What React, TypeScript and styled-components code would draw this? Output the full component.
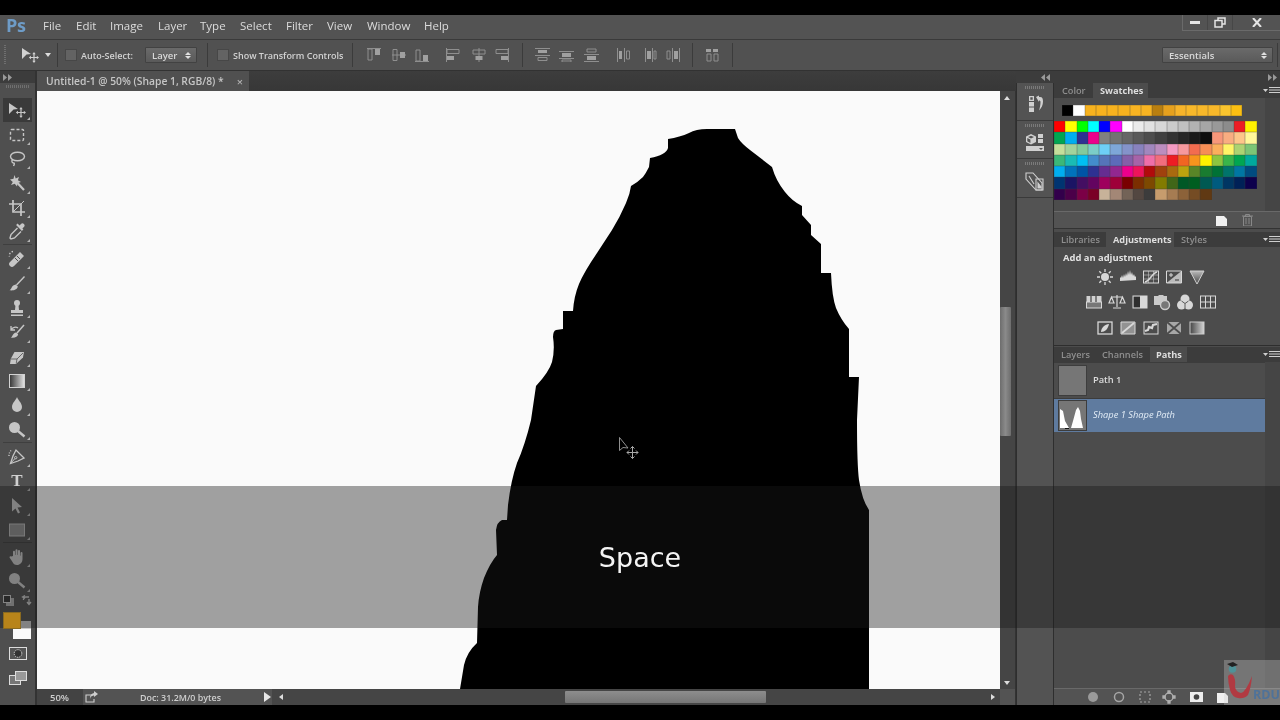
import React from "react";
import styled, { createGlobalStyle } from "styled-components";

const Global = createGlobalStyle`
  html, body { margin: 0; padding: 0; background: #000; }
  * { box-sizing: border-box; }
`;
const UI = `"Open Sans", "Noto Sans", sans-serif`;

const Screen = styled.div`
  position: relative; width: 1280px; height: 720px; overflow: hidden; background: #000;
  padding: 15px 0; display: flex; flex-direction: column; font-family: ${UI};
  filter: blur(0.5px);
`;
const MenuBar = styled.div`
  height: 25px; flex: none; background: #535353; border-bottom: 1px solid #3a3a3a;
  display: flex; align-items: center; position: relative; padding-bottom: 4px;
`;
const Logo = styled.div`
  width: 43px; padding-left: 6px; font: 700 18px "Open Sans", sans-serif; color: #6e9cc7; letter-spacing: -0.4px;
`;
const MenuItem = styled.span<{ $w: number }>`
  width: ${(p) => p.$w}px; font-size: 11.5px; color: #dcdcdc; white-space: nowrap;
`;
const WindowButtons = styled.div`
  margin-left: auto; width: 98px; height: 16px; align-self: flex-start; display: flex;
  border-bottom: 1px solid #6a6a6a; border-left: 1px solid #6a6a6a;
`;
const WindowButton = styled.div<{ $w: number }>`
  width: ${(p) => p.$w}px; display: flex; align-items: center; justify-content: center;
  border-right: 1px solid #474747; color: #e4e4e4;
  &:last-child { border-right: 0; }
`;
const Options = styled.div`
  height: 31px; flex: none; background: #515151; border-bottom: 1px solid #323232;
  display: flex; align-items: center; padding-left: 4px; color: #d2d2d2;
`;
const Grip = styled.div`
  width: 2px; height: 20px;
  background: repeating-linear-gradient(#6f6f6f 0 1px, transparent 1px 2px);
`;
const OptSlot = styled.div<{ $ml: number; $w: number }>`
  margin-left: ${(p) => p.$ml}px; width: ${(p) => p.$w}px; flex: none; display: flex; align-items: center;
  justify-content: flex-start; white-space: nowrap; font-size: 9px; font-weight: 600; color: #d2d2d2;
`;
const OptSep = styled.div<{ $ml: number }>`
  margin-left: ${(p) => p.$ml}px; width: 1px; height: 24px; flex: none; background: #3b3b3b;
`;
const Check = styled.div<{ $ml: number }>`
  margin-left: ${(p) => p.$ml}px; width: 12px; height: 12px; flex: none; background: #636363;
  border: 1px solid #474747;
`;
const Select = styled.div<{ $ml: number; $w: number }>`
  margin-left: ${(p) => p.$ml}px; width: ${(p) => p.$w}px; height: 16px; flex: none; display: flex;
  align-items: center; justify-content: space-between; padding: 0 5px 0 6px; font-size: 9.5px; font-weight: 600;
  color: #d8d8d8; background: linear-gradient(#6a6a6a, #5a5a5a); border: 1px solid #424242; border-radius: 1px;
`;
const Spinner = styled.span`
  display: inline-flex; flex-direction: column; gap: 1px;
  &::before, &::after { content: ""; width: 0; height: 0; border-left: 3px solid transparent; border-right: 3px solid transparent; }
  &::before { border-bottom: 3px solid #e0e0e0; }
  &::after { border-top: 3px solid #e0e0e0; }
`;
const Workspace = styled.div`
  flex: 1; min-height: 0; display: flex;
`;
const Toolbox = styled.div`
  width: 37px; flex: none; background: #4f4f4f; border-right: 2px solid #333; display: flex; flex-direction: column;
`;
const CollapseStrip = styled.div`
  height: 12px; flex: none; background: #3c3c3c; color: #9a9a9a; display: flex; align-items: center; padding: 0 3px;
`;
const StripMark = styled.div<{ $ml: string }>`
  margin-left: ${(p) => p.$ml}; display: flex;
`;
const ToolGrip = styled.div`
  height: 6px; margin: 2px 6px 0; flex: none;
  background: repeating-linear-gradient(90deg, #777 0 1px, transparent 1px 2px);
  opacity: .8; background-size: 100% 3px; background-repeat: no-repeat;
`;
const ToolList = styled.div`
  padding-top: 7px; display: flex; flex-direction: column;
`;
const Tool = styled.div<{ $on?: boolean }>`
  position: relative; height: 24.4px; margin: 0 3px; padding-right: 1px; display: flex; align-items: center; justify-content: center;
  color: #c6c6c6; background: ${(p) => (p.$on ? "#3a3a3a" : "transparent")};
  &::after { content: ""; position: absolute; right: 2px; bottom: 2px; width: 0; height: 0;
    border-left: 3px solid transparent; border-bottom: 3px solid #b5b5b5; }
`;
const ToolDivider = styled.div`
  height: 2.6px; margin: 0 3px; flex: none; border-top: 1px solid #3f3f3f;
`;
const ToolLetter = styled.span`
  font: 700 17px "Liberation Serif", serif; color: #d0d0d0;
`;
const MiniColors = styled.div`
  height: 16px; margin-top: -1px; padding: 0 3px; display: flex; justify-content: space-between; align-items: center; color: #c8c8c8;
`;
const ColorStack = styled.div`
  position: relative; height: 28px; margin: 3px 0 0 3px; width: 28px;
`;
const FgColor = styled.div`
  position: absolute; left: 0; top: 0; width: 18px; height: 17px; background: #b8841a; border: 1px solid #8a6a20; z-index: 1;
`;
const BgColor = styled.div`
  position: absolute; left: 10px; top: 9px; width: 18px; height: 18px; background: #fbfbfb;
  border-top: 8px solid #c9c9c9;
`;
const ModeIcon = styled.div<{ $mt: number }>`
  margin-top: ${(p) => p.$mt}px; display: flex; justify-content: center; color: #d2d2d2;
`;
const DocColumn = styled.div`
  width: 979px; flex: none; display: flex; flex-direction: column; background: #474747;
`;
const TabRow = styled.div`
  height: 20px; flex: none; background: linear-gradient(#3d3d3d, #373737); display: flex;
`;
const DocTab = styled.div`
  width: 212px; background: #505050; display: flex; align-items: center; justify-content: space-between;
  padding: 0 6px 0 9px; font-size: 10.3px; font-weight: 600; color: #c6c6c6; white-space: nowrap;
`;
const TabClose = styled.span`
  font-size: 11px; color: #b0b0b0;
`;
const DocMiddle = styled.div`
  flex: 1; min-height: 0; display: flex;
`;
const Canvas = styled.div`
  position: relative; width: 963px; background: #fafafa; overflow: hidden;
`;
const CanvasDrawing = styled.svg`
  position: absolute; inset: 0; width: 963px; height: 598px;
`;
const VScroll = styled.div`
  width: 16px; background: #454545; display: flex; flex-direction: column; align-items: center; border-right: 1px solid #333;
  position: relative; padding-top: 216px;
`;
const VThumb = styled.div`
  width: 11px; height: 129px; margin-right: 4px; background: linear-gradient(90deg, #6d6d6d, #8a8a8a 50%, #6d6d6d); border-radius: 1px;
`;
const ArrowMark = styled.div<{ $dir: "up" | "down" | "left" | "right"; $pos?: string }>`
  position: absolute; width: 0; height: 0; ${(p) => p.$pos || ""};
  border: 3px solid transparent;
  ${(p) => (p.$dir === "up" ? "border-bottom: 4px solid #ddd; border-top: 0;" : "")}
  ${(p) => (p.$dir === "down" ? "border-top: 4px solid #ddd; border-bottom: 0;" : "")}
  ${(p) => (p.$dir === "left" ? "border-right: 4px solid #ddd; border-left: 0;" : "")}
  ${(p) => (p.$dir === "right" ? "border-left: 4px solid #ddd; border-right: 0;" : "")}
`;
const StatusBar = styled.div`
  height: 16px; flex: none; display: flex; background: #535353; color: #cfcfcf; font-size: 9.5px; font-weight: 600; align-items: stretch;
`;
const Zoomed = styled.div`
  width: 46px; background: #434343; padding-left: 13px; display: flex; align-items: center;
`;
const ShareSlot = styled.div`
  width: 57px; display: flex; align-items: center; padding-left: 2px; color: #cfcfcf;
`;
const DocInfo = styled.div`
  width: 124px; font-size: 8.9px; display: flex; align-items: center; white-space: nowrap;
`;
const PlaySlot = styled.div`
  width: 8px; display: flex; align-items: center; justify-content: flex-start;
  &::before { content: ""; border-left: 7px solid #e8e8e8; border-top: 5px solid transparent; border-bottom: 5px solid transparent; }
`;
const HScroll = styled.div`
  position: relative; width: 728px; background: #454545; padding-left: 293px;
`;
const HThumb = styled.div`
  width: 201px; height: 12px; margin-top: 2px; background: linear-gradient(#8d8d8d, #767676); border-radius: 1px;
`;
const Corner = styled.div`
  width: 16px; background: #535353; border-right: 1px solid #333;
`;
const RightSide = styled.div`
  flex: 1; min-width: 0; display: flex; flex-direction: column;
`;
const RightBody = styled.div`
  flex: 1; min-height: 0; display: flex;
`;
const Dock = styled.div`
  width: 38px; flex: none; background: #535353; border-left: 1px solid #2e2e2e; border-right: 1px solid #2e2e2e; display: flex; flex-direction: column;
`;
const DockSection = styled.div<{ $h: number }>`
  height: ${(p) => p.$h}px; flex: none; border-bottom: 1px solid #3a3a3a; color: #d0d0d0;
  display: flex; flex-direction: column; align-items: center; padding-top: 3px;
`;
const DockGrip = styled.div`
  width: 20px; height: 3px; margin-bottom: 6px; background: repeating-linear-gradient(90deg, #7a7a7a 0 1px, transparent 1px 2px);
`;
const Panels = styled.div`
  flex: 1; min-width: 0; display: flex; flex-direction: column; background: #4c4c4c;
`;
const PanelHeader = styled.div`
  height: 15px; flex: none; background: #3c3c3c; display: flex; position: relative;
`;
const PanelTab = styled.div<{ $w: number; $pl: number; $on?: boolean }>`
  width: ${(p) => p.$w}px; padding-left: ${(p) => p.$pl}px; font-size: 9.2px; line-height: 16px; white-space: nowrap;
  font-weight: ${(p) => (p.$on ? 700 : 600)}; color: ${(p) => (p.$on ? "#dedede" : "#8f8f8f")};
  background: ${(p) => (p.$on ? "#4c4c4c" : "transparent")};
`;
const PanelMenu = styled.div`
  margin-left: auto; width: 17px; color: #cfcfcf; display: flex; align-items: center;
`;
const SwatchPanel = styled.div`
  height: 146px; flex: none; display: flex; flex-direction: column; border-bottom: 1px solid #333;
`;
const SwatchBody = styled.div`
  flex: 1; min-height: 0; display: flex;
`;
const SwatchWell = styled.div`
  width: 211px; flex: none; padding-top: 7px;
`;
const ScrollTrack = styled.div`
  width: 15px; flex: none; background: #454545;
`;
const RecentRow = styled.div`
  display: flex; padding-left: 8px; height: 11px; margin-bottom: 5px;
`;
const SwatchGrid = styled.div`
  display: grid; grid-template-columns: repeat(18, 11.25px); grid-auto-rows: 11.25px; width: 203px;
`;
const Swatch = styled.div<{ $c: string }>`
  background: ${(p) => p.$c}; box-shadow: inset 0 0 0 .5px rgba(60, 60, 60, .35);
`;
const RecentSwatch = styled(Swatch)`
  width: 11.25px; height: 11px;
`;
const PanelFoot = styled.div`
  height: 17px; flex: none; border-top: 1px solid #696969; background: #535353; display: flex; align-items: center; color: #e8e8e8; position: relative;
`;
const FootIcon = styled.div<{ $ml: number }>`
  margin-left: ${(p) => p.$ml}px; width: 14px; height: 14px; flex: none; display: flex; align-items: center; justify-content: center;
`;
const AdjustPanel = styled.div`
  height: 114px; flex: none; margin-top: 3px; display: flex; flex-direction: column; border-bottom: 1px solid #2e2e2e;
`;
const AdjustTitle = styled.div`
  padding: 4px 0 0 9px; height: 17px; font-size: 9.4px; font-weight: 700; color: #e2e2e2; white-space: nowrap;
`;
const AdjustRows = styled.div`
  width: 194px; display: flex; flex-direction: column; align-items: center;
`;
const AdjustRow = styled.div`
  display: flex; height: 25.5px; align-items: center; justify-content: center;
`;
const AdjustIcon = styled.div`
  width: 22.8px; display: flex; justify-content: center; color: #d8d8d8;
`;
const PathsPanel = styled.div`
  flex: 1; min-height: 0; margin-top: 1px; display: flex; flex-direction: column;
`;
const PathsBody = styled.div`
  flex: 1; min-height: 0; display: flex;
`;
const PathsList = styled.div`
  width: 211px; flex: none; display: flex; flex-direction: column;
`;
const PathRow = styled.div<{ $on?: boolean }>`
  height: ${(p) => (p.$on ? 34 : 36)}px; padding-left: 4px; display: flex; align-items: center; flex: none;
  background: ${(p) => (p.$on ? "#5f7b9f" : "#4c4c4c")}; border-top: 1px solid #3c3c3c;
`;
const PathThumb = styled.div`
  width: 29px; height: 31px; flex: none; background: #767676; border: 1px solid #3d3d3d; display: flex;
`;
const PathName = styled.span<{ $on?: boolean }>`
  margin-left: 6px; padding-bottom: 2px; font-size: 9.3px; white-space: nowrap; font-weight: ${(p) => (p.$on ? 400 : 600)};
  font-style: ${(p) => (p.$on ? "italic" : "normal")}; color: ${(p) => (p.$on ? "#e2ecf6" : "#dcdcdc")};
`;
const Band = styled.div`
  position: absolute; left: 0; right: 0; top: 486px; height: 142px; background: rgba(26, 26, 26, .4);
  display: flex; align-items: center; justify-content: center;
`;
const BandLabel = styled.span`
  font: 400 27px "DejaVu Sans", sans-serif; color: #f4f4f4;
`;
const Watermark = styled.div`
  position: absolute; left: 1224px; top: 660px; width: 56px; height: 45px; background: rgba(205, 205, 205, .32);
`;
const WatermarkArt = styled.svg`
  position: absolute; left: 0; top: 0; width: 56px; height: 45px;
`;
const WatermarkText = styled.span`
  position: absolute; left: 29px; top: 26px; font: 700 12.5px "Open Sans", sans-serif; color: #4f7299; white-space: nowrap;
`;

const S = ({ w = 18, h = 18, vb = "0 0 18 18", children }: { w?: number; h?: number; vb?: string; children: React.ReactNode }) => (
  <svg width={w} height={h} viewBox={vb} fill="none" stroke="currentColor" strokeWidth={1.4}>{children}</svg>
);
const solid = { fill: "currentColor", stroke: "none" };

const MoveGlyph = () => (
  <>
    <path {...solid} d="M1 2l9 6-4.5.5L1 13z" />
    <path strokeWidth={1.2} d="M13 7.5v8M9 11.5h8" />
    <path {...solid} d="M13 6l1.7 2.2h-3.4zM13 17l-1.7-2.2h3.4zM7.8 11.5l2.2-1.7v3.4zM18 11.5l-2.2 1.7V9.8z" />
  </>
);
const tools: React.ReactNode[] = [
  <S><MoveGlyph /></S>,
  <S><rect x="2.5" y="3.5" width="13" height="11" rx="1" strokeDasharray="3 2" /></S>,
  <S><ellipse cx="9.5" cy="6.5" rx="7" ry="4.3" /><path d="M4.5 9.5c-1.5 2 0 3.5 1 3.5s1.2 1 0 3" /></S>,
  <S><path {...solid} d="M6.5 1l1.2 3.4L11 3 9.9 6.3 13 8 9.7 8.9 9 12.5 6.8 9.8 3 11l1.8-3.1L2 5.4l3.5-.7z" /><path strokeWidth={2.2} d="M9.5 9l6.5 7" /></S>,
  <S><path strokeWidth={1.7} d="M5 1v12h12M1 5h12v12" /><path strokeWidth={1} d="M5 13L16 2" /></S>,
  <S><path {...solid} d="M11.5 2.5l1.5-1.5a2 2 0 012.9 2.9L14.4 5.4l1 1-1.5 1.5-5.8-5.8 1.5-1.5z" /><path d="M9.5 5L3 11.5 2 15l1 1 3.5-1L13 8.5" /></S>,
  <S><path d="M5 1.5a4 4 0 00-3.5 5" strokeDasharray="1.5 1.5" /><path {...solid} d="M12 2l4 4-10 10a2.8 2.8 0 01-4-4z" /><path stroke="#4f4f4f" strokeWidth={1} d="M7 8l3 3M9 6l3 3" /></S>,
  <S><path strokeWidth={1.4} d="M16.5 1.5L8.5 10" /><path {...solid} d="M7.8 9.5l2 2c-.3 2.5-3.5 4.5-8.3 3.8 2.4-1 1.8-5.2 6.3-5.8z" /></S>,
  <S><circle {...solid} cx="9" cy="4" r="3" /><path {...solid} d="M7.5 6h3l.5 5h4v3H3v-3h4zM3 15.5h12V17H3z" /></S>,
  <S><path strokeWidth={1.3} d="M3 7c1.5-3 5-3.5 7-2M3 3v4h4" /><path strokeWidth={1.5} d="M16 2l-7 8" /><path {...solid} d="M8.3 9.5l1.8 1.8c-.3 2.5-3.2 4-7.3 3.4 2.2-.9 1.4-4.6 5.5-5.2z" /></S>,
  <S><path {...solid} d="M6.5 4h9.5l-1 5.5L8 16H2l.8-5.2z" /><path stroke="#4f4f4f" strokeWidth={.8} d="M3 11h6l6-6M9 11l-.8 4.5" /></S>,
  <svg width="18" height="18" viewBox="0 0 18 18"><defs><linearGradient id="gradTool"><stop offset="0" stopColor="#333" /><stop offset="1" stopColor="#e6e6e6" /></linearGradient></defs><rect x="1.5" y="2.5" width="15" height="13" fill="url(#gradTool)" stroke="#d2d2d2" /></svg>,
  <S><path {...solid} d="M9 1c1 3 5 6 5 10a5 5 0 01-10 0c0-4 4-7 5-10z" /></S>,
  <S><circle {...solid} cx="6.5" cy="6.5" r="5.5" /><path strokeWidth={2.4} d="M10 10l6.5 5.5" /></S>,
  <S><path d="M16 10L8 2 5 8 2.5 15.5 10 13l6-3z" strokeWidth={1.3} /><path strokeWidth={1} d="M2.5 15.5L7 10.5" /><circle cx="7.7" cy="9.7" r="1.2" strokeWidth={.9} /><path strokeDasharray="1 1.5" d="M1 8c0-3 1-5 3-6" /></S>,
  <ToolLetter>T</ToolLetter>,
  <S><path {...solid} d="M4 1l10 9-4.5.5 2.5 5-2 1-2.5-5L4 14.5z" /></S>,
  <S><rect x="1.5" y="3" width="15" height="12" fill="#8d8d8d" stroke="#b8b8b8" strokeWidth={1} /></S>,
  <S><path {...solid} d="M5 8V3.7a1 1 0 012 0V7l.5-.2V2.2a1 1 0 012 0v4.5l.5.2V3a1 1 0 012 0v4.5l.5.3V5a1 1 0 012 0v6c0 3.5-2.5 6-5.5 6-2.5 0-3.5-1-4.5-3L1.700 9.700c-.7-1 .6-2 1.500-1.300z" /></S>,
  <S><circle {...solid} cx="6.5" cy="6.5" r="5.5" /><path strokeWidth={2.4} d="M10 10l6.5 5.5" /></S>,
];

const AlignPaths: string[][] = [
  ["M0 .5h14M1 1h4v11H1z", "M8 1h5v6H8z"],
  ["M0 7h14M1 1.5h4v11H1z", "M8 4h5v6H8z"],
  ["M0 13.5h14M1 2h4v11H1z", "M8 7h5v6H8z"],
  ["M.5 0v14M1 1.5h12v4H1z", "M1 8h7v4H1z"],
  ["M7 0v14M1 2h12v4H1z", "M3.5 8h7v4h-7z"],
  ["M13.5 0v14M1 1.5h12v4H1z", "M6 8h7v4H6z"],
  ["M0 .5h15M0 7.5h15M3 9.5h9v3H3z", "M3 2h9v3H3z"],
  ["M0 3.5h15M0 10.5h15M3 12h9v2H3z", "M3 5h9v4H3z"],
  ["M0 6.5h15M0 13.5h15M3 1h9v3H3z", "M3 8h9v4H3z"],
  ["M.5 0v14M7.5 0v14M9.5 3h3v8h-3z", "M2 3h3v8H2z"],
  ["M3.5 0v14M10.5 0v14M12 3h2v8h-2z", "M5 3h4v8H5z"],
  ["M6.5 0v14M13.5 0v14M1 3h3v8H1z", "M8 3h4v8H8z"],
  ["M2 6h4v7H2zM9 6h4v7H9z", "M1 1h5v3H1zM8 1h5v3H8z"],
];
const AlignIcon = ({ i }: { i: number }) => (
  <svg width="15" height="14" viewBox="0 0 15 14" fill="none" stroke="#8f8f8f" strokeWidth={1}>
    <path d={AlignPaths[i][0]} />
    <path d={AlignPaths[i][1]} fill="#a0a0a0" stroke="none" />
  </svg>
);

const recent = ["#000", "#fff", "#f7b21e", "#f7b21e", "#f7b21e", "#f7b21e", "#f8b422", "#f8b422", "#b97f10", "#e6a11e", "#f7b42a", "#f8b82a", "#f8b82a", "#f8b82a", "#f9c42e", "#fbbf12"];
const swatches = [
  "#f00", "#ff0", "#0f0", "#0ff", "#00f", "#f0f", "#fff", "#ebebeb", "#e1e1e1", "#d7d7d7", "#cbcbcb", "#c0c0c0", "#b2b2b2", "#a6a6a6", "#999", "#8c8c8c", "#ed1c24", "#fff200",
  "#00a651", "#00aeef", "#2e3192", "#ec008c", "#808080", "#737373", "#666", "#595959", "#4d4d4d", "#404040", "#333", "#262626", "#1a1a1a", "#0d0d0d", "#f7977a", "#f9ad81", "#fdc68a", "#fff79a",
  "#c4df9b", "#a2d39c", "#82ca9d", "#7bcdc8", "#6ecff6", "#7ea7d8", "#8493ca", "#8882be", "#a187be", "#bc8dbf", "#f49ac2", "#f6989d", "#f26c4f", "#f68e55", "#fbaf5c", "#fff467", "#acd372", "#7cc576",
  "#3bb878", "#1abbb4", "#00bff3", "#438ccb", "#5574b9", "#5c6bb9", "#855fa8", "#a763a8", "#ef6ea8", "#f26d7d", "#ed1c24", "#f26522", "#f7941d", "#fff200", "#8dc63f", "#39b54a", "#00a651", "#00a99d",
  "#00aeef", "#0072bc", "#0054a6", "#2e3192", "#662d91", "#92278f", "#ec008c", "#ed145b", "#b10b0b", "#a0410d", "#a86a0f", "#bba30e", "#598527", "#197b30", "#007236", "#00746b", "#0076a3", "#004b80",
  "#003471", "#1b1464", "#440e62", "#630460", "#9e005d", "#9e0039", "#790000", "#7b2e00", "#7d4900", "#827b00", "#406618", "#005826", "#005e20", "#005952", "#005b7f", "#003663", "#002157", "#0d004c",
  "#32004b", "#4b0049", "#7b0046", "#7a0026", "#c7b299", "#a38776", "#736357", "#534741", "#3c3c3c", "#c69c6d", "#a67c52", "#8c6239", "#754c24", "#603913",
];

const DoubleArrow = ({ left }: { left?: boolean }) => (
  <svg width="9" height="7" viewBox="0 0 9 7" fill="currentColor">
    {left ? <path d="M4 0v7L0 3.5zM9 0v7L5 3.5z" /> : <path d="M0 0v7l4-3.5zM5 0v7l4-3.5z" />}
  </svg>
);
const MenuGlyph = () => (
  <svg width="17" height="9" viewBox="0 0 17 9" fill="currentColor">
    <path d="M0 3h5L2.5 6zM6 1h11v1H6zM6 3.5h11v1H6zM6 6h11v1H6z" />
  </svg>
);

const adjust: React.ReactNode[][] = [
  [
    <S><circle {...solid} cx="9" cy="9" r="4" /><path strokeWidth={1.3} d="M9 1v3M9 14v3M1 9h3M14 9h3M3.3 3.3l2 2M12.7 12.7l2 2M14.7 3.3l-2 2M5.3 12.700l-2 2" /></S>,
    <S><path {...solid} d="M1 13V9l1 1 1-3 1 3 1-4 1 3 1-4 1 3 1-5 1 4 1-5 1 5 1-3 1 4 1-2 1 3 1-1v4z" /></S>,
    <S><rect x="1.5" y="3" width="15" height="12" strokeWidth={1} /><path d="M1.5 7h15M1.5 11h15M6.5 3v12M11.5 3v12" strokeWidth={.5} /><path strokeWidth={1.6} d="M3 14C8 13 10 5 15 4" /></S>,
    <S><path {...solid} d="M1.5 15h15V3z" opacity=".8" /><path d="M1.5 3h15v12h-15z" strokeWidth={1} /><path d="M4 7h4M6 5v4" strokeWidth={1} /><path d="M10 12h4" strokeWidth={1} stroke="#333" /></S>,
    <svg width="18" height="18" viewBox="0 0 18 18"><defs><linearGradient id="tri" x1="0" x2="0" y1="0" y2="1"><stop offset="0" stopColor="#bbb" /><stop offset="1" stopColor="#444" /></linearGradient></defs><path d="M2 3h14L9 16z" fill="url(#tri)" stroke="#cfcfcf" /></svg>,
  ],
  [
    <S><path {...solid} d="M1.5 3h15v6h-15z" opacity=".95" /><rect x="1.5" y="9" width="15" height="6" fill="#777" strokeWidth={1} /><path d="M6 3v6M11 3v6" stroke="#555" strokeWidth={1.4} /></S>,
    <S><path strokeWidth={1.2} d="M9 2v12M3 4h12M5 15h8M3.5 4L1 10h5zM14.5 4L12 10h5z" /></S>,
    <S><rect x="2" y="3" width="14" height="12" strokeWidth={1} /><path {...solid} d="M9 3h7v12H9z" /><path fill="#2f2f2f" stroke="none" d="M3 4h6v10H3z" /></S>,
    <S><path {...solid} d="M1 3h4l1-1h4l1 1h3v9H1z" opacity=".9" /><circle cx="12" cy="12" r="4.5" fill="#777" stroke="#ccc" /></S>,
    <S><circle {...solid} cx="9" cy="6" r="4.5" /><circle {...solid} cx="5.5" cy="12" r="4.5" /><circle {...solid} cx="12.5" cy="12" r="4.5" /><path stroke="#4c4c4c" strokeWidth={.9} d="M5.5 8l3.5 2.5 3.5-2.5M9 10.5v5" /></S>,
    <S><rect x="1.5" y="3" width="15" height="12" strokeWidth={1} /><path strokeWidth={1} d="M6.5 3v12M11.5 3v12M1.5 9h15" /></S>,
  ],
  [
    <S><rect x="2" y="3" width="14" height="12" strokeWidth={1.3} /><path {...solid} d="M5 13c0-4 4-8 8-8-1 5-4 8-8 8z" /></S>,
    <S><path {...solid} d="M2 3h14v12H2z" opacity=".5" /><path strokeWidth={1} d="M2 3h14v12H2z" /><path strokeWidth={1.8} d="M3 14L15 4" /></S>,
    <S><rect x="2" y="3" width="14" height="12" strokeWidth={1} /><path strokeWidth={2.2} d="M3 12l3-1 1-3 3 1 1-3 4-1" /></S>,
    <S><path {...solid} d="M2 3h14v12H2z" opacity=".65" /><path strokeWidth={1.8} stroke="#4c4c4c" d="M2 3l14 12M16 3L2 15" /></S>,
    <svg width="18" height="18" viewBox="0 0 18 18"><defs><linearGradient id="gm"><stop offset="0" stopColor="#444" /><stop offset="1" stopColor="#d5d5d5" /></linearGradient></defs><rect x="2" y="3" width="14" height="12" fill="url(#gm)" stroke="#ccc" /></svg>,
  ],
];

const menus: [string, number][] = [["File", 33], ["Edit", 34], ["Image", 48], ["Layer", 42], ["Type", 40], ["Select", 46], ["Filter", 41], ["View", 40], ["Window", 57], ["Help", 40]];
const alignGaps = [14, 10, 8, 16, 11, 8, 12, 9, 10, 18, 10, 9];
const silhouette =
  "M735 129L707 129Q696 129 689 133Q680 137 668 139L668 148Q666 155 650 158L649 167Q646 173 643 177Q638 182 631 186Q630 194 626 203Q620 217 612 230L597 253Q584 272 579 284Q574 296 573 311L563 311L563 329L556 330Q553 331 553 337Q555 350 552 362Q549 372 536 386L531 420Q525 445 517 463Q511 480 508 505L507 520L502 520Q497 522 496 530L497 555Q490 563 484 578Q479 592 478 607L477 643Q467 652 464 665L460 689L869 689L869 510Q862 500 859 480Q857 465 857 420L859 377L849 377L849 329Q841 320 836 308Q832 297 831 273L821 273L821 244L811 235L811 225L802 215L802 206Q792 201 785 192Q776 181 772 167L750 150Q741 143 738 138Z";

export default function App() {
  return (
    <>
      <Global />
      <Screen>
        <MenuBar>
          <Logo>Ps</Logo>
          {menus.map(([m, w]) => <MenuItem key={m} $w={w}>{m}</MenuItem>)}
          <WindowButtons>
            <WindowButton $w={25}><svg width="10" height="3"><rect width="10" height="3" fill="currentColor" /></svg></WindowButton>
            <WindowButton $w={26}><svg width="12" height="11" viewBox="0 0 12 11" fill="none" stroke="currentColor" strokeWidth="1.5"><path d="M4 3V1h7v6H8M1 3.5h7v6.500H1z" /></svg></WindowButton>
            <WindowButton $w={47}><svg width="10" height="9" viewBox="0 0 10 9" fill="none" stroke="currentColor" strokeWidth="2"><path d="M1 0l8 9M9 0L1 9" /></svg></WindowButton>
          </WindowButtons>
        </MenuBar>
        <Options>
          <Grip />
          <OptSlot $ml={15} $w={18}><S><MoveGlyph /></S></OptSlot>
          <OptSlot $ml={6} $w={6}><ArrowMark $dir="down" /></OptSlot>
          <OptSep $ml={6} />
          <Check $ml={7} />
          <OptSlot $ml={4} $w={50}>Auto-Select:</OptSlot>
          <Select $ml={14} $w={52}>Layer<Spinner /></Select>
          <OptSep $ml={10} />
          <Check $ml={9} />
          <OptSlot $ml={4} $w={105}>Show Transform Controls</OptSlot>
          <OptSep $ml={14} />
          {alignGaps.map((g, i) => (
            <React.Fragment key={i}>
              <OptSlot $ml={g} $w={15}><AlignIcon i={i} /></OptSlot>
              {i === 5 && <OptSep $ml={12} />}
            </React.Fragment>
          ))}
          <OptSep $ml={11} />
          <OptSlot $ml={12} $w={15}><AlignIcon i={12} /></OptSlot>
          <OptSep $ml={12} />
          <Select $ml={429} $w={111}>Essentials<Spinner /></Select>
          <OptSep $ml={4} />
        </Options>
        <Workspace>
          <Toolbox>
            <CollapseStrip><DoubleArrow /></CollapseStrip>
            <ToolGrip />
            <ToolList>
              {tools.map((t, i) => (
                <React.Fragment key={i}>
                  <Tool $on={i === 0}>{t}</Tool>
                  {(i === 5 || i === 13 || i === 17) && <ToolDivider />}
                </React.Fragment>
              ))}
              <MiniColors>
                <svg width="11" height="11" viewBox="0 0 11 11"><rect x="3" y="3" width="8" height="8" fill="#aaa" /><rect x=".5" y=".5" width="7" height="7" fill="#333" stroke="#ccc" /></svg>
                <svg width="11" height="11" viewBox="0 0 11 11" fill="none" stroke="currentColor" strokeWidth="1.3"><path d="M2.5 5V3.5C2.5 2.5 3.5 2 5 2h3M8 9V4M6 7l2 2.5L10 7M4 .5L1.5 2 4 3.5" /></svg>
              </MiniColors>
              <ColorStack><FgColor /><BgColor /></ColorStack>
              <ModeIcon $mt={7}><svg width="18" height="13" viewBox="0 0 18 13"><rect x=".5" y=".5" width="17" height="12" fill="#555" stroke="#ddd" /><circle cx="9" cy="6.5" r="3.8" fill="#333" stroke="#eee" strokeDasharray="1 1" /></svg></ModeIcon>
              <ModeIcon $mt={11}><svg width="18" height="14" viewBox="0 0 18 14"><rect x=".5" y="4.5" width="11" height="9" fill="#777" stroke="#ddd" /><rect x="6.5" y=".5" width="11" height="9" fill="#999" stroke="#ddd" /></svg></ModeIcon>
            </ToolList>
          </Toolbox>
          <DocColumn>
            <TabRow><DocTab>Untitled-1 @ 50% (Shape 1, RGB/8) *<TabClose>×</TabClose></DocTab></TabRow>
            <DocMiddle>
              <Canvas>
                <CanvasDrawing viewBox="37 91 963 598">
                  <path fill="#000" d={silhouette} />
                  <path fill="none" stroke="#a0a0a0" strokeWidth=".9" d="M619.5 437.5v13l3.5-3 5 .5z" />
                  <path fill="none" stroke="#a8a8a8" strokeWidth="1" d="M632.5 446.5v12M627 452.5h11M630.5 448.5l2-2 2 2M630.5 456.5l2 2 2-2M629 450.5l-2 2 2 2M636 450.5l2 2-2 2" />
                </CanvasDrawing>
              </Canvas>
              <VScroll>
                <ArrowMark $dir="up" $pos="top: 5px; left: 4px;" />
                <VThumb />
                <ArrowMark $dir="down" $pos="bottom: 4px; left: 4px;" />
              </VScroll>
            </DocMiddle>
            <StatusBar>
              <Zoomed>50%</Zoomed>
              <ShareSlot>
                <svg width="13" height="12" viewBox="0 0 13 12" fill="none" stroke="currentColor" strokeWidth="1.1"><path d="M8 4H1v7h8V8" /><path fill="currentColor" stroke="none" d="M9 0l4 3-4 3V4.5C6.5 4.5 5.5 6 5 8 4.800 5 6 2.500 9 2z" /></svg>
              </ShareSlot>
              <DocInfo>Doc: 31.2M/0 bytes</DocInfo>
              <PlaySlot />
              <HScroll>
                <ArrowMark $dir="left" $pos="top: 5px; left: 7px;" />
                <HThumb />
                <ArrowMark $dir="right" $pos="top: 5px; right: 5px;" />
              </HScroll>
              <Corner />
            </StatusBar>
          </DocColumn>
          <RightSide>
            <CollapseStrip>
              <StripMark $ml="22px"><DoubleArrow left /></StripMark>
              <StripMark $ml="auto"><DoubleArrow /></StripMark>
            </CollapseStrip>
            <RightBody>
              <Dock>
                <DockSection $h={38}>
                  <DockGrip />
                  <svg width="18" height="18" viewBox="0 0 18 18" fill="currentColor"><path d="M3 1h5v5H3zM3 7h5v4.5H3zM3 12.5h5V17H3zM4.3 2.3v2.400h2.400V2.300z" /><path d="M10 2l3-1.500v1.500h1c2.500 0 3 2 3 4.500 0 3.500-1.500 6.500-4 9 1-3 1.500-6 1.500-8.500 0-1-.5-1.500-1.500-1.500V7z" /></svg>
                </DockSection>
                <DockSection $h={38}>
                  <DockGrip />
                  <svg width="20" height="20" viewBox="0 0 20 20" fill="currentColor"><path d="M6 1l5 2.500v5.500l-5 2.500L1 9V3.500zM6 2.700L3 4l3 1.500L9 4zM2.300 5v3.300l3.100 1.700V6.600z" /><path d="M13 1h5v4h-5zM13 6h5v4h-5zM1 13h18v5H1z" /><path fill="#535353" d="M14 15h4l-2 2z" /></svg>
                </DockSection>
                <DockSection $h={39}>
                  <DockGrip />
                  <svg width="20" height="20" viewBox="0 0 20 20" fill="none" stroke="currentColor" strokeWidth="1.1"><path d="M1 2h7l9 10v7h-6L1 8z" /><path d="M11 8h7v11h-7z" /><path fill="currentColor" d="M13 12l3 4v1h-3z" /><path d="M4 5l5 8" /></svg>
                </DockSection>
              </Dock>
              <Panels>
                <SwatchPanel>
                  <PanelHeader>
                    <PanelTab $w={39} $pl={8}>Color</PanelTab>
                    <PanelTab $w={55} $pl={7} $on>Swatches</PanelTab>
                    <PanelMenu><MenuGlyph /></PanelMenu>
                  </PanelHeader>
                  <SwatchBody>
                    <SwatchWell>
                      <RecentRow>{recent.map((c, i) => <RecentSwatch key={i} $c={c} />)}</RecentRow>
                      <SwatchGrid>{swatches.map((c, i) => <Swatch key={i} $c={c} />)}</SwatchGrid>
                    </SwatchWell>
                    <ScrollTrack />
                  </SwatchBody>
                  <PanelFoot>
                    <FootIcon $ml={160}><svg width="11" height="11" viewBox="0 0 11 11" fill="#f0f0f0"><path d="M0 1h8l3 3v7H0z" /></svg></FootIcon>
                    <FootIcon $ml={12}><svg width="11" height="12" viewBox="0 0 11 12" fill="none" stroke="#888" strokeWidth="1"><path d="M0 2h11M3.5 2V.5h4V2M1.5 2.5h8V12h-8zM4 4v6M7 4v6" /></svg></FootIcon>
                  </PanelFoot>
                </SwatchPanel>
                <AdjustPanel>
                  <PanelHeader>
                    <PanelTab $w={52} $pl={7}>Libraries</PanelTab>
                    <PanelTab $w={68} $pl={7} $on>Adjustments</PanelTab>
                    <PanelTab $w={40} $pl={7}>Styles</PanelTab>
                    <PanelMenu><MenuGlyph /></PanelMenu>
                  </PanelHeader>
                  <AdjustTitle>Add an adjustment</AdjustTitle>
                  <AdjustRows>
                    {adjust.map((row, r) => (
                      <AdjustRow key={r}>{row.map((ic, i) => <AdjustIcon key={i}>{ic}</AdjustIcon>)}</AdjustRow>
                    ))}
                  </AdjustRows>
                </AdjustPanel>
                <PathsPanel>
                  <PanelHeader>
                    <PanelTab $w={41} $pl={7}>Layers</PanelTab>
                    <PanelTab $w={55} $pl={7}>Channels</PanelTab>
                    <PanelTab $w={37} $pl={6} $on>Paths</PanelTab>
                    <PanelMenu><MenuGlyph /></PanelMenu>
                  </PanelHeader>
                  <PathsBody>
                    <PathsList>
                      <PathRow><PathThumb /><PathName>Path 1</PathName></PathRow>
                      <PathRow $on>
                        <PathThumb>
                          <svg width="27" height="29" viewBox="0 0 27 29"><path fill="#fff" d="M1 8l3 2 2 10 4 7H1zM19 27h-7l2-7 3-11 2-3 2 4 1 8 2 9z" /><path fill="#111" d="M6 27h4v1H6z" /></svg>
                        </PathThumb>
                        <PathName $on>Shape 1 Shape Path</PathName>
                      </PathRow>
                    </PathsList>
                    <ScrollTrack />
                  </PathsBody>
                  <PanelFoot>
                    <FootIcon $ml={32}><svg width="12" height="12"><circle cx="6" cy="6" r="5" fill="#9a9a9a" /></svg></FootIcon>
                    <FootIcon $ml={12}><svg width="12" height="12" fill="none" stroke="#a5a5a5" strokeWidth="1.5"><circle cx="6" cy="6" r="4.5" /></svg></FootIcon>
                    <FootIcon $ml={12}><svg width="12" height="12" fill="none" stroke="#a5a5a5" strokeWidth="1.2" strokeDasharray="2 2"><rect x="1" y="1" width="10" height="10" /></svg></FootIcon>
                    <FootIcon $ml={10}><svg width="14" height="14" viewBox="0 0 14 14" fill="none" stroke="#b0b0b0" strokeWidth="1.3"><circle cx="7" cy="7" r="4" /><path fill="#b0b0b0" d="M6 1h2v2H6zM6 11h2v2H6zM1 6h2v2H1zM11 6h2v2h-2z" /></svg></FootIcon>
                    <FootIcon $ml={13}><svg width="13" height="10" viewBox="0 0 13 10"><rect width="13" height="10" fill="#eee" /><circle cx="6.5" cy="5" r="2.8" fill="#444" /></svg></FootIcon>
                    <FootIcon $ml={12}><svg width="11" height="11" viewBox="0 0 11 11" fill="#f0f0f0"><path d="M0 1h8l3 3v7H0z" /></svg></FootIcon>
                  </PanelFoot>
                </PathsPanel>
              </Panels>
            </RightBody>
          </RightSide>
        </Workspace>
        <Band><BandLabel>Space</BandLabel></Band>
        <Watermark>
          <WatermarkArt viewBox="0 0 56 45">
            <path fill="#b13a42" d="M4 16Q6 13 9 15Q12 19 11 27Q12 32 17 33Q22 32 28 16Q27 28 24 35Q20 39 14 38Q8 37 6 30Q4 22 4 16Z" />
            <circle cx="8.5" cy="9" r="3.8" fill="#4f9298" />
            <path fill="#222" d="M3 4l6-2 5 3-6 2z" />
          </WatermarkArt>
          <WatermarkText>RDU</WatermarkText>
        </Watermark>
      </Screen>
    </>
  );
}
